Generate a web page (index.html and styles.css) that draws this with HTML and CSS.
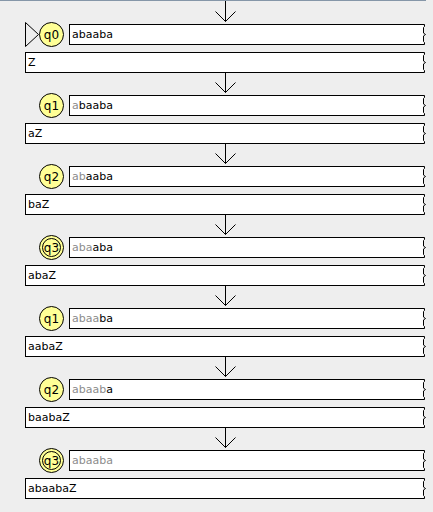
FILE: index.html
```html
<!DOCTYPE html>
<html>
<head>
<meta charset="utf-8">
<link rel="stylesheet" href="styles.css">
</head>
<body>
<div class="panel">
  <div class="step">
    <div class="arrow arrow-first"><svg width="21" height="21" viewBox="0 0 21 21"><path d="M10.5 0V20.5M0.5 10.5L10.5 20.5L20.5 10.5" /></svg></div>
    <div class="state-row">
      <svg class="start" width="14" height="25" viewBox="0 0 14 25"><path d="M0.5 0.5L13.5 12.5L0.5 24.5Z" /></svg>
      <div class="state">q0</div>
      <div class="field"><div class="field-body"><span class="todo">abaaba</span></div><svg class="brace" width="3" height="21" viewBox="0 0 3 21"><path d="M0 0.5H1.5V2.5L0.5 3.5V9L2.5 10.5L0.5 12V17.5L1.5 18.5V20.5H0" /></svg></div>
    </div>
    <div class="field stack"><div class="field-body">Z</div><svg class="brace" width="3" height="21" viewBox="0 0 3 21"><path d="M0 0.5H1.5V2.5L0.5 3.5V9L2.5 10.5L0.5 12V17.5L1.5 18.5V20.5H0" /></svg></div>
  </div>

  <div class="step">
    <div class="arrow"><svg width="21" height="20" viewBox="0 0 21 20"><path d="M10.5 0V19.5M0.5 9.5L10.5 19.5L20.5 9.5" /></svg></div>
    <div class="state-row">
      <div class="start-space"></div>
      <div class="state">q1</div>
      <div class="field"><div class="field-body"><span class="done">a</span><span class="todo">baaba</span></div><svg class="brace" width="3" height="21" viewBox="0 0 3 21"><path d="M0 0.5H1.5V2.5L0.5 3.5V9L2.5 10.5L0.5 12V17.5L1.5 18.5V20.5H0" /></svg></div>
    </div>
    <div class="field stack"><div class="field-body">aZ</div><svg class="brace" width="3" height="21" viewBox="0 0 3 21"><path d="M0 0.5H1.5V2.5L0.5 3.5V9L2.5 10.5L0.5 12V17.5L1.5 18.5V20.5H0" /></svg></div>
  </div>

  <div class="step">
    <div class="arrow"><svg width="21" height="20" viewBox="0 0 21 20"><path d="M10.5 0V19.5M0.5 9.5L10.5 19.5L20.5 9.5" /></svg></div>
    <div class="state-row">
      <div class="start-space"></div>
      <div class="state">q2</div>
      <div class="field"><div class="field-body"><span class="done">ab</span><span class="todo">aaba</span></div><svg class="brace" width="3" height="21" viewBox="0 0 3 21"><path d="M0 0.5H1.5V2.5L0.5 3.5V9L2.5 10.5L0.5 12V17.5L1.5 18.5V20.5H0" /></svg></div>
    </div>
    <div class="field stack"><div class="field-body">baZ</div><svg class="brace" width="3" height="21" viewBox="0 0 3 21"><path d="M0 0.5H1.5V2.5L0.5 3.5V9L2.5 10.5L0.5 12V17.5L1.5 18.5V20.5H0" /></svg></div>
  </div>

  <div class="step">
    <div class="arrow"><svg width="21" height="20" viewBox="0 0 21 20"><path d="M10.5 0V19.5M0.5 9.5L10.5 19.5L20.5 9.5" /></svg></div>
    <div class="state-row">
      <div class="start-space"></div>
      <div class="state final">q3</div>
      <div class="field"><div class="field-body"><span class="done">aba</span><span class="todo">aba</span></div><svg class="brace" width="3" height="21" viewBox="0 0 3 21"><path d="M0 0.5H1.5V2.5L0.5 3.5V9L2.5 10.5L0.5 12V17.5L1.5 18.5V20.5H0" /></svg></div>
    </div>
    <div class="field stack"><div class="field-body">abaZ</div><svg class="brace" width="3" height="21" viewBox="0 0 3 21"><path d="M0 0.5H1.5V2.5L0.5 3.5V9L2.5 10.5L0.5 12V17.5L1.5 18.5V20.5H0" /></svg></div>
  </div>

  <div class="step">
    <div class="arrow"><svg width="21" height="20" viewBox="0 0 21 20"><path d="M10.5 0V19.5M0.5 9.5L10.5 19.5L20.5 9.5" /></svg></div>
    <div class="state-row">
      <div class="start-space"></div>
      <div class="state">q1</div>
      <div class="field"><div class="field-body"><span class="done">abaa</span><span class="todo">ba</span></div><svg class="brace" width="3" height="21" viewBox="0 0 3 21"><path d="M0 0.5H1.5V2.5L0.5 3.5V9L2.5 10.5L0.5 12V17.5L1.5 18.5V20.5H0" /></svg></div>
    </div>
    <div class="field stack"><div class="field-body">aabaZ</div><svg class="brace" width="3" height="21" viewBox="0 0 3 21"><path d="M0 0.5H1.5V2.5L0.5 3.5V9L2.5 10.5L0.5 12V17.5L1.5 18.5V20.5H0" /></svg></div>
  </div>

  <div class="step">
    <div class="arrow"><svg width="21" height="20" viewBox="0 0 21 20"><path d="M10.5 0V19.5M0.5 9.5L10.5 19.5L20.5 9.5" /></svg></div>
    <div class="state-row">
      <div class="start-space"></div>
      <div class="state">q2</div>
      <div class="field"><div class="field-body"><span class="done">abaab</span><span class="todo">a</span></div><svg class="brace" width="3" height="21" viewBox="0 0 3 21"><path d="M0 0.5H1.5V2.5L0.5 3.5V9L2.5 10.5L0.5 12V17.5L1.5 18.5V20.5H0" /></svg></div>
    </div>
    <div class="field stack"><div class="field-body">baabaZ</div><svg class="brace" width="3" height="21" viewBox="0 0 3 21"><path d="M0 0.5H1.5V2.5L0.5 3.5V9L2.5 10.5L0.5 12V17.5L1.5 18.5V20.5H0" /></svg></div>
  </div>

  <div class="step">
    <div class="arrow"><svg width="21" height="20" viewBox="0 0 21 20"><path d="M10.5 0V19.5M0.5 9.5L10.5 19.5L20.5 9.5" /></svg></div>
    <div class="state-row">
      <div class="start-space"></div>
      <div class="state final">q3</div>
      <div class="field"><div class="field-body"><span class="done">abaaba</span></div><svg class="brace" width="3" height="21" viewBox="0 0 3 21"><path d="M0 0.5H1.5V2.5L0.5 3.5V9L2.5 10.5L0.5 12V17.5L1.5 18.5V20.5H0" /></svg></div>
    </div>
    <div class="field stack"><div class="field-body">abaabaZ</div><svg class="brace" width="3" height="21" viewBox="0 0 3 21"><path d="M0 0.5H1.5V2.5L0.5 3.5V9L2.5 10.5L0.5 12V17.5L1.5 18.5V20.5H0" /></svg></div>
  </div>
</div>
</body>
</html>
```

FILE: styles.css
```css
html, body {
  margin: 0;
  padding: 0;
  background: #eeeeee;
}

body {
  width: 433px;
  height: 512px;
  overflow: hidden;
  font-family: "DejaVu Sans", sans-serif;
  font-size: 11px;
  color: #000;
}

.panel {
  border-top: 1px solid #8596a8;
  padding-left: 25px;
  width: 401px;
}

.step {
  display: flex;
  flex-direction: column;
}

.arrow {
  height: 20px;
  display: flex;
  justify-content: center;
}

.arrow-first {
  height: 21px;
}

.arrow svg path,
.start path,
.brace path {
  fill: none;
  stroke: #000;
  stroke-width: 1;
}

.state-row {
  height: 25px;
  display: flex;
  align-items: center;
}

.start,
.start-space {
  width: 14px;
  height: 25px;
  flex: none;
}

.state {
  width: 23px;
  height: 23px;
  border: 1px solid #000;
  border-radius: 50%;
  background: #ffff96;
  display: flex;
  align-items: center;
  justify-content: center;
  font-size: 12px;
  flex: none;
  margin-right: 5px;
  position: relative;
}

.state.final::after {
  content: "";
  position: absolute;
  left: 2px;
  top: 2px;
  width: 17px;
  height: 17px;
  border: 1px solid #000;
  border-radius: 50%;
}

.field {
  flex: 1;
  height: 21px;
  display: flex;
}

.field-body {
  flex: 1;
  border: 1px solid #000;
  border-right: 0;
  background: #fff;
  padding-left: 2px;
  line-height: 19px;
  white-space: pre;
}

.brace {
  flex: none;
  display: block;
}

.stack {
  flex: none;
  margin-top: 5px;
}

.done {
  color: #8c8c8c;
}

.todo {
  color: #000;
}
```
